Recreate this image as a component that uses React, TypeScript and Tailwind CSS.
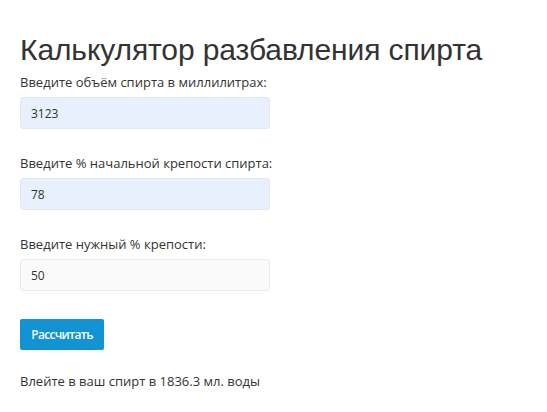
import React from "react";

const labelCls =
  "block text-[13px] leading-[19px] mb-[5px] text-[#333] [font-family:'Open_Sans',sans-serif] tracking-[0px]";
const inputBase =
  "block w-[250px] h-[32px] px-[10px] text-[12px] text-[#333] rounded-[3px] border outline-none [font-family:'Open_Sans',sans-serif]";

export default function App() {
  return (
    <div className="min-h-[412px] bg-white px-[20px] pt-[32px]">
      <h1 className="text-[30px] leading-[35px] text-[#333] mb-[6px] [font-family:'Liberation_Sans',Arial,sans-serif] font-normal tracking-[-0.1px]">
        Калькулятор разбавления спирта
      </h1>
      <div className="flex flex-col gap-[25px]">
        <div>
          <label className={labelCls}>Введите объём спирта в миллилитрах:</label>
          <input
            className={inputBase + " bg-[#e8f0fe] border-[#e3e8f0]"}
            defaultValue="3123"
          />
        </div>
        <div>
          <label className={labelCls}>Введите % начальной крепости спирта:</label>
          <input
            className={inputBase + " bg-[#e8f0fe] border-[#e3e8f0]"}
            defaultValue="78"
          />
        </div>
        <div>
          <label className={labelCls}>Введите нужный % крепости:</label>
          <input
            className={inputBase + " bg-[#fafafa] border-[#ebebeb]"}
            defaultValue="50"
          />
        </div>
      </div>
      <button className="mt-[28px] h-[31px] w-[84px] rounded-[2px] bg-[#1193d4] text-white text-[12px] font-semibold [font-family:'Open_Sans',sans-serif] tracking-[-0.7px]">
        Рассчитать
      </button>
      <p className="mt-[22px] text-[13px] leading-[19px] text-[#333] [font-family:'Open_Sans',sans-serif]">
        Влейте в ваш спирт в 1836.3 мл. воды
      </p>
    </div>
  );
}
